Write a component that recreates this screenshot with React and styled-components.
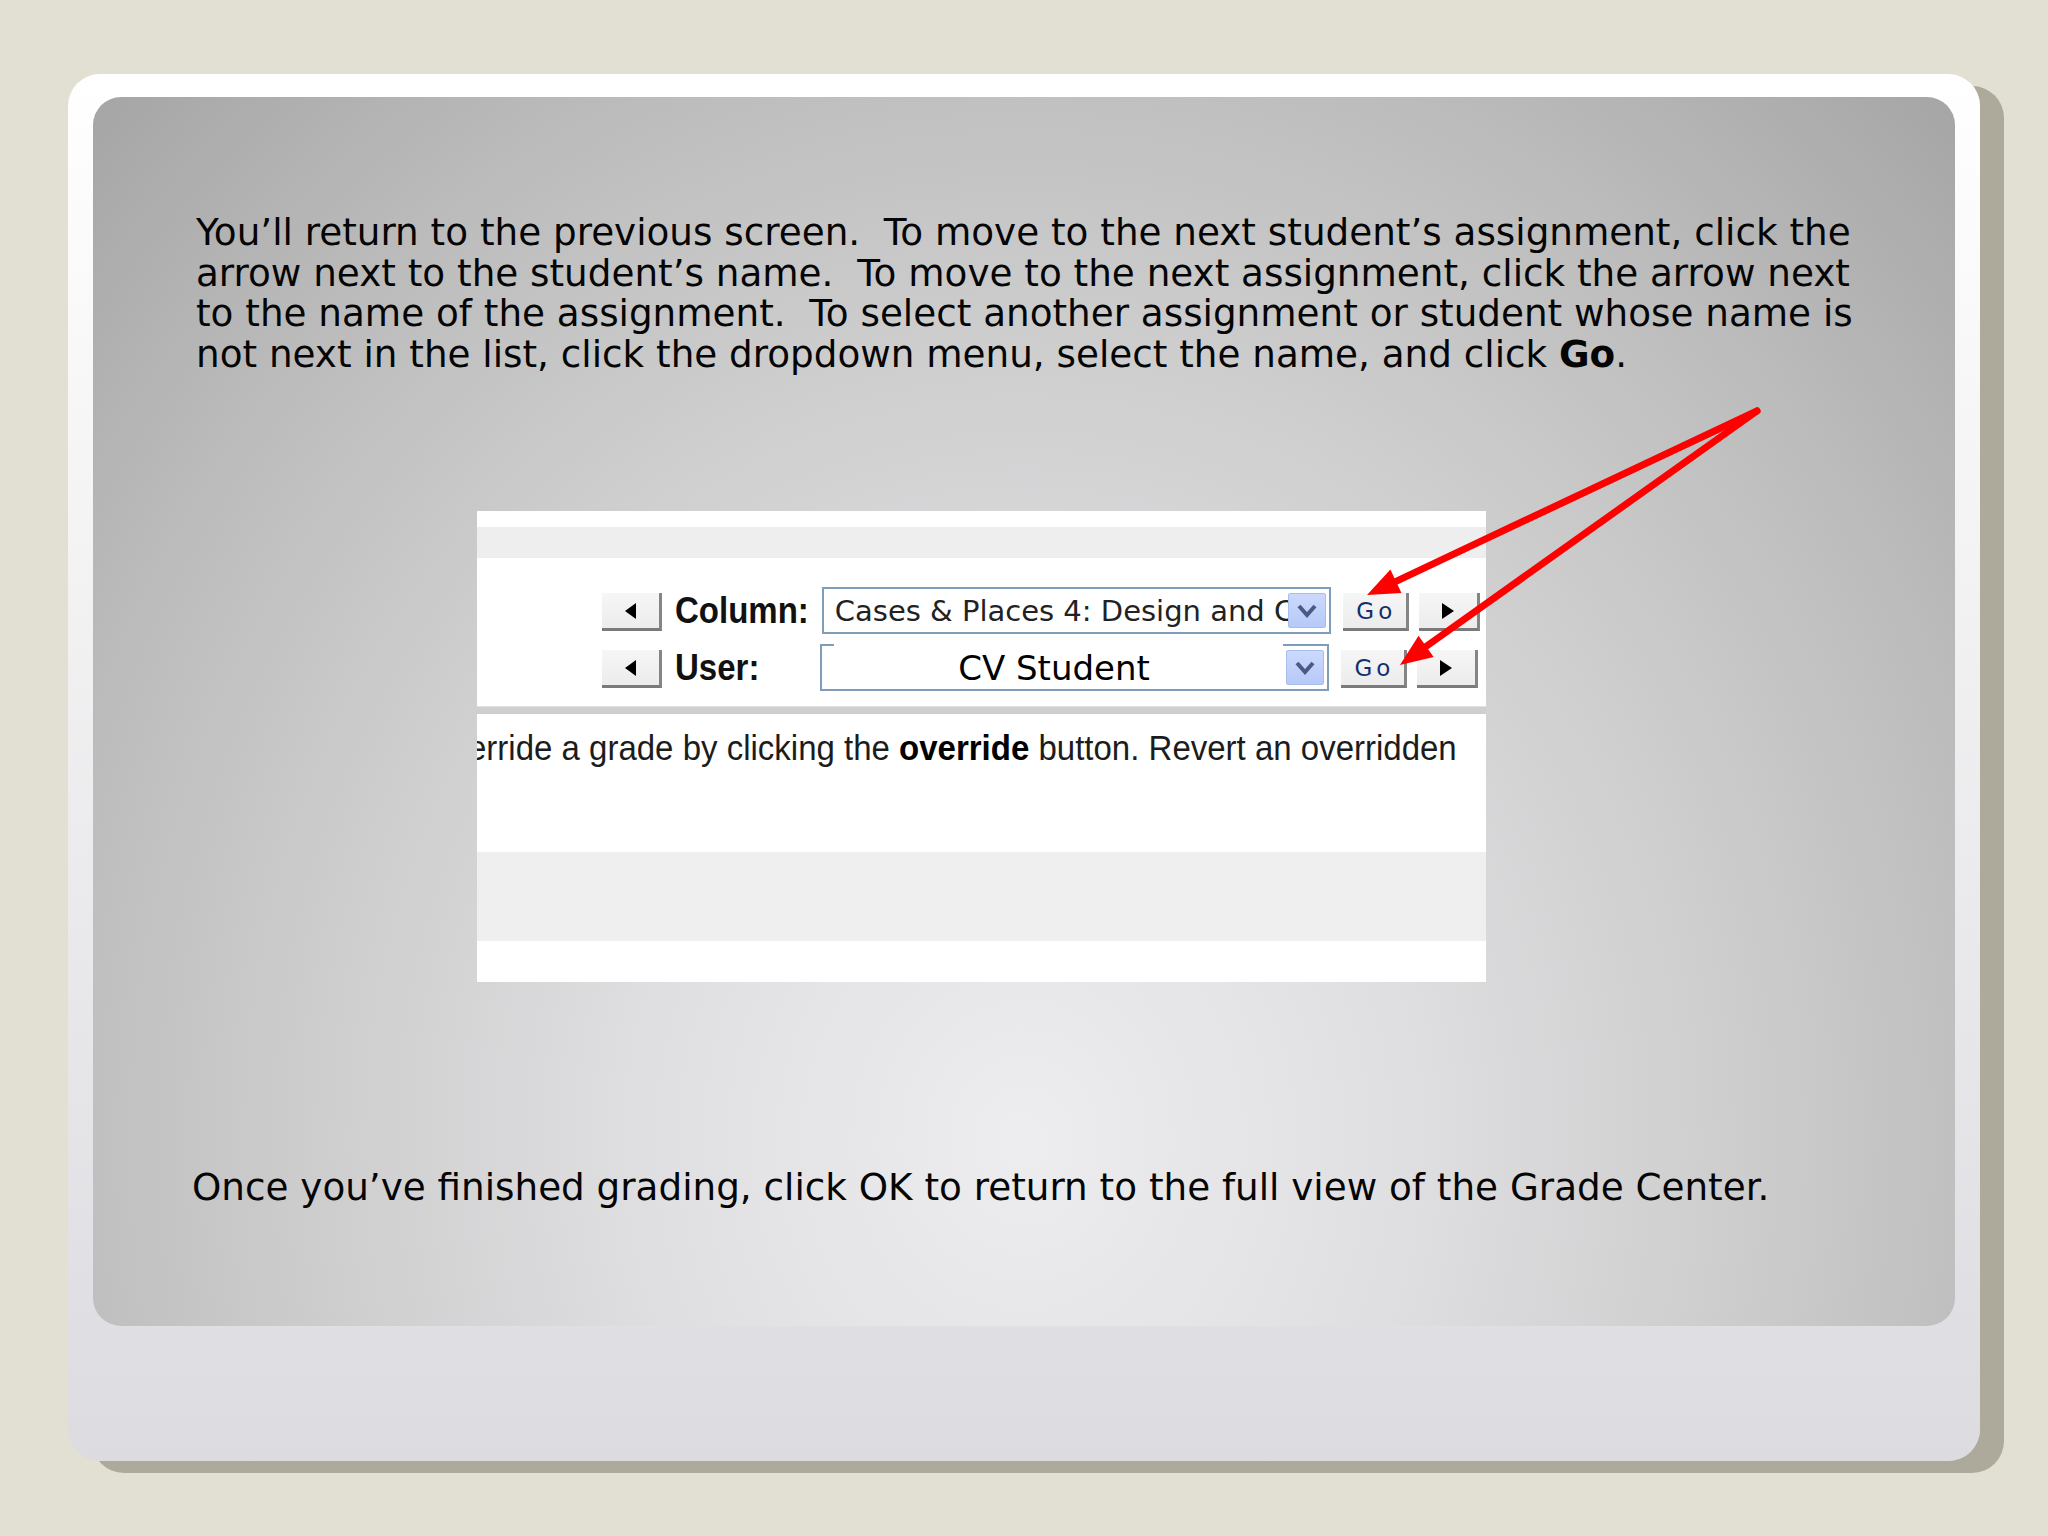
import React from 'react';
import styled, { createGlobalStyle } from 'styled-components';

const GlobalStyle = createGlobalStyle`
  html, body {
    margin: 0;
    padding: 0;
    background: #e2dfd3;
  }
  * {
    box-sizing: border-box;
  }
`;

const Page = styled.div`
  position: relative;
  width: 2048px;
  height: 1536px;
  padding: 74px 0 0 68px;
  background: #e2dfd3;
  overflow: hidden;
`;

const Card = styled.div`
  width: 1912px;
  height: 1387px;
  padding: 23px 25px 0;
  border-radius: 32px;
  background: linear-gradient(180deg, #ffffff 0%, #f1f1f2 40%, #dcdbe0 100%);
  box-shadow: 24px 12px 0 #adaa9c;
`;

const Slide = styled.div`
  height: 1229px;
  padding-top: 115px;
  border-radius: 28px;
  background: radial-gradient(
    ellipse 70% 120% at 50% 85%,
    #ededef 0%,
    #e0e0e2 28%,
    #cdcdce 55%,
    #bdbdbd 75%,
    #a6a6a6 100%
  );
`;

const Body = styled.p`
  margin: ${(p) => p.$top || 0}px 0 0 ${(p) => p.$left}px;
  font-family: 'DejaVu Sans', Verdana, sans-serif;
  font-size: 37.3px;
  line-height: 40.5px;
  color: #050505;
  white-space: pre;

  b {
    font-weight: bold;
  }
`;

const Shot = styled.div`
  width: 1009px;
  height: 471px;
  margin: 137px 0 0 384px;
  background: #ffffff;
  overflow: hidden;
  display: flex;
  flex-direction: column;
  font-family: 'Liberation Sans', Arial, sans-serif;
`;

const Band = styled.div`
  flex: 0 0 ${(p) => p.$h}px;
  background: ${(p) => p.$bg || '#ffffff'};
`;

const Controls = styled.div`
  flex: 0 0 148px;
  padding: 29px 0 0 125px;
  display: flex;
  flex-direction: column;
  gap: 10px;
`;

const Row = styled.div`
  display: flex;
  align-items: center;
  height: 47px;
`;

const NavButton = styled.div`
  flex: 0 0 ${(p) => p.$w || 60}px;
  height: 38px;
  margin-left: ${(p) => p.$gap || 0}px;
  margin-top: 3px;
  display: flex;
  align-items: center;
  justify-content: center;
  background: linear-gradient(180deg, #f6f6f6 0%, #ececec 100%);
  border-right: 3px solid #858585;
  border-bottom: 3px solid #7a7a7a;
  color: #14306a;
  font-family: 'DejaVu Sans', Verdana, sans-serif;
  font-size: 23px;
  letter-spacing: 4px;
  padding-left: ${(p) => (p.$text ? 4 : 0)}px;
`;

const Label = styled.div`
  flex: 0 0 132px;
  margin-left: 13px;
  font-family: 'Liberation Sans', Arial, sans-serif;
  font-weight: bold;
  font-size: 33px;
  color: #111;
  white-space: nowrap;
  transform: scaleY(1.12);
`;

const Select = styled.div`
  position: relative;
  flex: 0 0 509px;
  min-width: 0;
  height: 47px;
  margin-left: 13px;
  display: flex;
  align-items: stretch;
  padding: 4px 3px 4px 0;
  border: 2px solid #7f9db9;
  border-top-color: ${(p) => (p.$broken ? 'transparent' : '#7f9db9')};
  background: #ffffff;

  ${(p) =>
    p.$broken &&
    `
    &::before, &::after {
      content: '';
      position: absolute;
      top: -2px;
      height: 2px;
      background: #7f9db9;
    }
    &::before { left: -2px; width: 14px; }
    &::after { right: -2px; width: 46px; }
  `}
`;

const Value = styled.div`
  flex: 1 1 0;
  min-width: 0;
  overflow: hidden;
  white-space: nowrap;
  display: flex;
  align-items: center;
  justify-content: ${(p) => (p.$center ? 'center' : 'flex-start')};
  padding-left: ${(p) => (p.$center ? 0 : 11)}px;
  font-family: 'DejaVu Sans', Verdana, sans-serif;
  font-size: ${(p) => (p.$center ? 34 : 29)}px;
  color: ${(p) => (p.$center ? '#000' : '#222')};
`;

const Drop = styled.div`
  flex: 0 0 38px;
  display: flex;
  align-items: center;
  justify-content: center;
  border: 1px solid #a7bdea;
  border-radius: 2px;
  background: linear-gradient(180deg, #cbd9fd 0%, #b6c9f8 100%);
`;

const Divider = styled.div`
  flex: 0 0 8px;
  background: #cfcfcf;
  border-top: 1px solid #e2e2e2;
`;

const Hint = styled.div`
  flex: 0 0 138px;
  padding: 17px 0 0 0;
  margin-left: -9px;
  white-space: nowrap;
  font-family: 'Liberation Sans', Arial, sans-serif;
  font-size: 33px;
  line-height: 40px;
  color: #1c1c1c;
  transform-origin: left center;
  transform: scaleY(1.08);

  b {
    color: #000;
  }
`;

const Overlay = styled.svg`
  position: absolute;
  left: 0;
  top: 0;
  pointer-events: none;
`;

const Tri = ({ dir }) => (
  <svg width="18" height="18" viewBox="0 0 18 18">
    {dir === 'left' ? (
      <polygon points="14,1 14,17 3,9" fill="#000" />
    ) : (
      <polygon points="3,1 3,17 15,9" fill="#000" />
    )}
  </svg>
);

const Chevron = () => (
  <svg width="20" height="14" viewBox="0 0 20 14">
    <polyline
      points="2,2 10,11 18,2"
      fill="none"
      stroke="#4a5a84"
      strokeWidth="4"
      strokeLinejoin="miter"
    />
  </svg>
);

const arrow = (sx, sy, tx, ty) => {
  const dx = tx - sx;
  const dy = ty - sy;
  const len = Math.hypot(dx, dy);
  const ux = dx / len;
  const uy = dy / len;
  const bx = tx - ux * 32;
  const by = ty - uy * 32;
  const nx = uy;
  const ny = -ux;
  return {
    line: [sx, sy, bx + ux * 4, by + uy * 4],
    head: `${tx},${ty} ${bx + nx * 13},${by + ny * 13} ${bx - nx * 13},${by - ny * 13}`,
  };
};

const arrows = [arrow(1757, 411, 1367, 595), arrow(1757, 411, 1400, 665)];

export default function App() {
  return (
    <>
      <GlobalStyle />
      <Page>
        <Card>
          <Slide>
            <Body $left={103}>
              {'You’ll return to the previous screen.  To move to the next student’s assignment, click the\n'}
              {'arrow next to the student’s name.  To move to the next assignment, click the arrow next\n'}
              {'to the name of the assignment.  To select another assignment or student whose name is\n'}
              {'not next in the list, click the dropdown menu, select the name, and click '}
              <b>Go</b>.
            </Body>

            <Shot>
              <Band $h={16} />
              <Band $h={31} $bg="#eeeeee" />
              <Controls>
                <Row>
                  <NavButton>
                    <Tri dir="left" />
                  </NavButton>
                  <Label>Column:</Label>
                  <Select>
                    <Value>Cases &amp; Places 4: Design and Create</Value>
                    <Drop>
                      <Chevron />
                    </Drop>
                  </Select>
                  <NavButton $w={66} $gap={12} $text>
                    Go
                  </NavButton>
                  <NavButton $w={61} $gap={10}>
                    <Tri dir="right" />
                  </NavButton>
                </Row>
                <Row>
                  <NavButton>
                    <Tri dir="left" />
                  </NavButton>
                  <Label>User:</Label>
                  <Select $broken>
                    <Value $center>CV Student</Value>
                    <Drop>
                      <Chevron />
                    </Drop>
                  </Select>
                  <NavButton $w={66} $gap={12} $text>
                    Go
                  </NavButton>
                  <NavButton $w={61} $gap={10}>
                    <Tri dir="right" />
                  </NavButton>
                </Row>
              </Controls>
              <Divider />
              <Hint>
                erride a grade by clicking the <b>override</b> button. Revert an overridden
              </Hint>
              <Band $h={89} $bg="#efefef" />
              <Band $h={42} />
            </Shot>

            <Body $left={99} $top={185}>
              Once you’ve finished grading, click OK to return to the full view of the Grade Center.
            </Body>
          </Slide>
        </Card>

        <Overlay width="2048" height="1536" viewBox="0 0 2048 1536">
          {arrows.map((a, i) => (
            <g key={i}>
              <line
                x1={a.line[0]}
                y1={a.line[1]}
                x2={a.line[2]}
                y2={a.line[3]}
                stroke="#ff0000"
                strokeWidth="7"
                strokeLinecap="round"
              />
              <polygon points={a.head} fill="#ff0000" />
            </g>
          ))}
        </Overlay>
      </Page>
    </>
  );
}
